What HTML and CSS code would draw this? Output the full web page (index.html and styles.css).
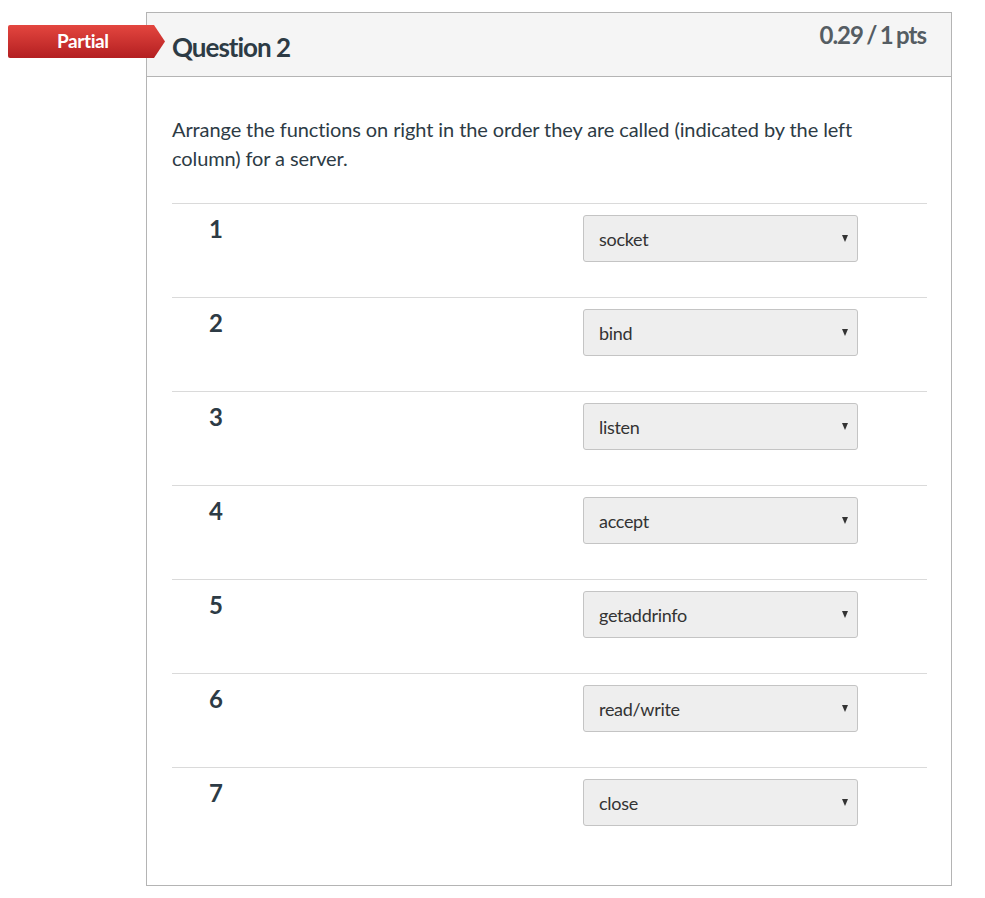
FILE: index.html
```html
<!DOCTYPE html>
<html>
<head>
<meta charset="utf-8">
<link rel="stylesheet" href="styles.css">
</head>
<body>
<div class="page">
  <div class="badge">Partial</div>
  <div class="card">
    <div class="card-header">
      <h2 class="title">Question 2</h2>
      <div class="pts">0.29 / 1 pts</div>
    </div>
    <div class="card-body">
      <p class="prompt">Arrange the functions on right in the order they are called (indicated by the left column) for a server.</p>
      <div class="rows">
        <div class="row"><div class="num">1</div><div class="sel"><div class="select"><span>socket</span><span class="caret"></span></div></div></div>
        <div class="row"><div class="num">2</div><div class="sel"><div class="select"><span>bind</span><span class="caret"></span></div></div></div>
        <div class="row"><div class="num">3</div><div class="sel"><div class="select"><span>listen</span><span class="caret"></span></div></div></div>
        <div class="row"><div class="num">4</div><div class="sel"><div class="select"><span>accept</span><span class="caret"></span></div></div></div>
        <div class="row"><div class="num">5</div><div class="sel"><div class="select"><span>getaddrinfo</span><span class="caret"></span></div></div></div>
        <div class="row"><div class="num">6</div><div class="sel"><div class="select"><span>read/write</span><span class="caret"></span></div></div></div>
        <div class="row"><div class="num">7</div><div class="sel"><div class="select"><span>close</span><span class="caret"></span></div></div></div>
      </div>
    </div>
  </div>
</div>
</body>
</html>
```
FILE: styles.css
```css
* { box-sizing: border-box; }
html, body { margin: 0; padding: 0; background: #fff; }
body { font-family: Lato, "Open Sans", sans-serif; color: #2d3b45; }
.page { position: relative; padding: 12px 0 0 146px; }
.badge {
  position: absolute; left: 8px; top: 25px;
  width: 157px; height: 33px;
  background: linear-gradient(#e4463f, #b31f21);
  color: #fff; font-weight: 700; font-size: 19px; letter-spacing: -0.4px;
  line-height: 31px; padding-left: 49px;
  clip-path: polygon(0 0, 146px 0, 157px 50%, 146px 100%, 0 100%);
  border-radius: 2px 0 0 2px;
}
.card { width: 806px; height: 874px; border: 1px solid #b4b4b4; }
.card-header {
  height: 64px; background: #f5f5f5; border-bottom: 1px solid #b4b4b4;
  display: flex; justify-content: space-between; align-items: flex-start;
  padding: 0 25px 0 25px;
}
.title { margin: 20px 0 0; font-size: 26px; font-weight: 700; letter-spacing: -1px; line-height: 28px; color: #2d3b45; }
.pts { margin-top: 8px; font-size: 24px; font-weight: 700; letter-spacing: -1px; word-spacing: -1.5px; line-height: 28px; color: #555d63; }
.card-body { padding: 38px 24px 0 25px; }
.prompt { margin: 0 0 30px; max-width: 720px; font-size: 20px; letter-spacing: -0.1px; line-height: 29px; color: #2d3b45; }
.row { display: flex; border-top: 1px solid #dadada; height: 94px; padding-top: 11px; }
.num { width: 411px; padding: 2px 0 0 37px; font-size: 24px; font-weight: 700; line-height: 24px; color: #2d3b45; }
.select {
  width: 275px; height: 47px; background: #eeeeee; border: 1px solid #c4c4c4; border-radius: 3px;
  display: flex; align-items: center; justify-content: space-between;
  padding: 0 9px 0 15px; font-size: 18px; letter-spacing: -0.3px; color: #333;
}
.caret { width: 0; height: 0; border-left: 3.5px solid transparent; border-right: 3.5px solid transparent; border-top: 7px solid #333; }
```
